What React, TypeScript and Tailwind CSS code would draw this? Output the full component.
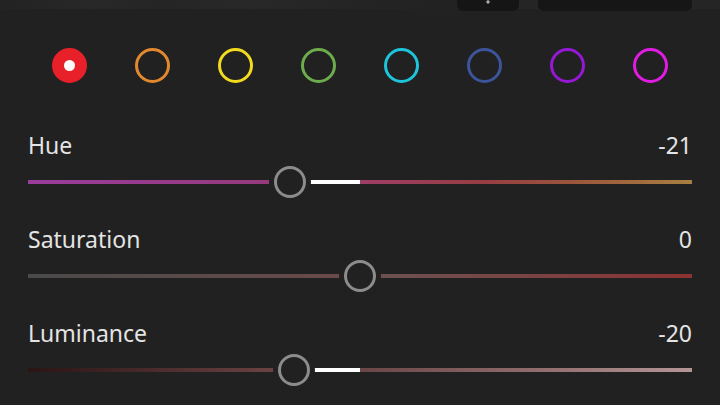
import type { CSSProperties } from 'react'

// colour swatches along the top
const swatches = [
  { name: 'red', ring: 'border-[#e8202a] bg-[#e8202a]' },
  { name: 'orange', ring: 'border-[#e2882e]' },
  { name: 'yellow', ring: 'border-[#f2da1e]' },
  { name: 'green', ring: 'border-[#6cac4c]' },
  { name: 'aqua', ring: 'border-[#1ec4dc]' },
  { name: 'blue', ring: 'border-[#3c5499]' },
  { name: 'purple', ring: 'border-[#9418d4]' },
  { name: 'magenta', ring: 'border-[#e01ce4]' },
]

type SliderProps = {
  label: string
  value: number
  track: string
}

function Slider({ label, value, track }: SliderProps) {
  // -100..100 mapped to 0..100%
  const pos = (value + 100) / 2
  const fill: CSSProperties =
    pos < 50 ? { left: `${pos}%`, width: `${50 - pos}%` } : { left: '50%', width: `${pos - 50}%` }

  return (
    <div className="flex flex-col">
      <div className="flex items-center justify-between h-6 text-[23px] leading-6 text-[#e4e4e4]">
        <span>{label}</span>
        <span>{value}</span>
      </div>
      <div className="relative mt-[9px] h-8">
        <div className={`absolute left-0 right-0 top-[14px] h-1 ${track}`} />
        {value !== 0 && <div className="absolute top-[14px] h-1 bg-white" style={fill} />}
        <div
          className="absolute top-0 w-8 h-8 -ml-4 rounded-full border-[3px] border-[#8c8c8c] bg-[#212121] shadow-[0_0_0_5px_#212121]"
          style={{ left: `${pos}%` }}
        />
      </div>
    </div>
  )
}

export default function App() {
  return (
    <div
      className="w-[720px] h-[405px] overflow-hidden bg-[#212121] flex flex-col"
      style={{ fontFamily: '"Noto Sans", "Liberation Sans", sans-serif' }}
    >
      {/* top toolbar remnants */}
      <div className="flex items-start h-[11px] bg-[linear-gradient(to_bottom,#252525_0,#252525_9px,#212121_9px)]">
        <div className="flex-1 h-[9px] bg-[linear-gradient(to_right,#232323,#282828_20%,#252525_35%,#282828_55%,#242424_80%,#222222)]" />
        <div className="w-[62px] h-[11px] rounded-b-md bg-[#151515] flex justify-center">
          <svg width="6" height="4" viewBox="0 0 6 4">
            <rect x="2.3" y="0" width="1.4" height="2" fill="#b5b5b5" />
            <polygon points="0.5,1.5 5.5,1.5 3,4" fill="#b5b5b5" />
          </svg>
        </div>
        <div className="ml-[19px] mr-[28px] w-[154px] h-[11px] rounded-b-md bg-[#161616]" />
      </div>

      {/* colour swatches */}
      <div className="mt-[37px] pl-[52px] flex gap-[48px]">
        {swatches.map((s, i) => (
          <div
            key={s.name}
            className={`w-[35px] h-[35px] rounded-full border-[3px] flex items-center justify-center ${s.ring}`}
          >
            {i === 0 && <div className="w-[11px] h-[11px] rounded-full bg-white" />}
          </div>
        ))}
      </div>

      {/* sliders */}
      <div className="mt-[50px] px-[28px] flex flex-col gap-[29px]">
        <Slider
          label="Hue"
          value={-21}
          track="bg-[linear-gradient(to_right,#9a3c9c_0%,#943a7c_36%,#9e3d66_50%,#963d44_68%,#9b553c_82%,#a87f40_100%)]"
        />
        <Slider
          label="Saturation"
          value={0}
          track="bg-[linear-gradient(to_right,#4a4a4a_0%,#6a4a4a_47%,#6c5050_53%,#7a4444_75%,#8c3232_100%)]"
        />
        <Slider
          label="Luminance"
          value={-20}
          track="bg-[linear-gradient(to_right,#2a1414_0%,#6a4242_37%,#6a4646_50%,#8e6a6a_75%,#b49696_100%)]"
        />
      </div>
    </div>
  )
}
